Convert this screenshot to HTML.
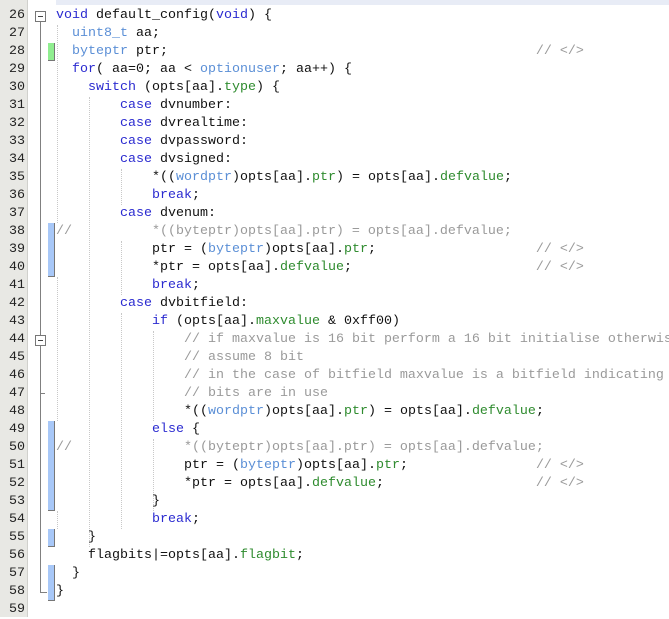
<!DOCTYPE html>
<html><head><style>
body{margin:0;width:669px;height:617px;overflow:hidden;background:#fff;position:relative;font-family:"Liberation Mono",monospace;font-size:13.33px}
.g{position:absolute;left:0;top:0;width:27px;height:617px;background:#e8e8e4;border-right:1px solid #d0d0cc}
.n{position:absolute;left:0;width:25px;text-align:right;height:18px;line-height:18px;color:#222}
.l{position:absolute;left:56px;height:18px;line-height:18px;white-space:pre;color:#111}
.k{color:#2b2bd0}.t{color:#5b8fd6}.m{color:#2e8b2e}.c{color:#9a9a9a}
.gd{position:absolute;width:0;border-left:1px dotted #c8c8c8}
.mk{position:absolute;left:48px;width:6px;border:1px solid #777;border-top:none;border-left:none}
.fb{position:absolute;left:35px;width:9px;height:9px;border:1px solid #777;background:#fff}
.fb:after{content:"";position:absolute;left:2px;top:4px;width:5px;height:1px;background:#444}
</style></head><body>
<div style="position:absolute;left:56px;top:0;width:613px;height:5px;background:#e8ecf6"></div>
<div class="g"></div>
<div class="n" style="top:-11px">25</div>
<div style="position:absolute;left:40px;top:21px;width:1px;height:572px;background:#808080"></div>
<div style="position:absolute;left:40px;top:592px;width:7px;height:1px;background:#808080"></div>
<div style="position:absolute;left:40px;top:393px;width:5px;height:1px;background:#808080"></div>
<div class="fb" style="top:11px"></div>
<div class="fb" style="top:335px"></div>
<div class="mk" style="top:43px;height:17px;background:#90ee90"></div>
<div class="mk" style="top:223px;height:53px;background:#a8c8f8"></div>
<div class="mk" style="top:421px;height:89px;background:#a8c8f8"></div>
<div class="mk" style="top:529px;height:17px;background:#a8c8f8"></div>
<div class="mk" style="top:565px;height:35px;background:#a8c8f8"></div>
<div class="gd" style="left:57px;top:25px;height:198px"></div>
<div class="gd" style="left:57px;top:277px;height:144px"></div>
<div class="gd" style="left:57px;top:511px;height:18px"></div>
<div class="gd" style="left:89px;top:97px;height:450px"></div>
<div class="gd" style="left:121px;top:169px;height:36px"></div>
<div class="gd" style="left:121px;top:241px;height:54px"></div>
<div class="gd" style="left:121px;top:313px;height:216px"></div>
<div class="gd" style="left:153px;top:331px;height:90px"></div>
<div class="gd" style="left:153px;top:439px;height:72px"></div>

<div class="n" style="top:7px">26</div><div class="l" style="top:7px"><span class="k">void</span> default_config(<span class="k">void</span>) {</div>
<div class="n" style="top:25px">27</div><div class="l" style="top:25px">  <span class="t">uint8_t</span> aa;</div>
<div class="n" style="top:43px">28</div><div class="l" style="top:43px">  <span class="t">byteptr</span> ptr;                                              <span class="c">// &lt;/&gt;</span></div>
<div class="n" style="top:61px">29</div><div class="l" style="top:61px">  <span class="k">for</span>( aa=0; aa &lt; <span class="t">optionuser</span>; aa++) {</div>
<div class="n" style="top:79px">30</div><div class="l" style="top:79px">    <span class="k">switch</span> (opts[aa].<span class="m">type</span>) {</div>
<div class="n" style="top:97px">31</div><div class="l" style="top:97px">        <span class="k">case</span> dvnumber:</div>
<div class="n" style="top:115px">32</div><div class="l" style="top:115px">        <span class="k">case</span> dvrealtime:</div>
<div class="n" style="top:133px">33</div><div class="l" style="top:133px">        <span class="k">case</span> dvpassword:</div>
<div class="n" style="top:151px">34</div><div class="l" style="top:151px">        <span class="k">case</span> dvsigned:</div>
<div class="n" style="top:169px">35</div><div class="l" style="top:169px">            *((<span class="t">wordptr</span>)opts[aa].<span class="m">ptr</span>) = opts[aa].<span class="m">defvalue</span>;</div>
<div class="n" style="top:187px">36</div><div class="l" style="top:187px">            <span class="k">break</span>;</div>
<div class="n" style="top:205px">37</div><div class="l" style="top:205px">        <span class="k">case</span> dvenum:</div>
<div class="n" style="top:223px">38</div><div class="l" style="top:223px"><span class="c">//          *((byteptr)opts[aa].ptr) = opts[aa].defvalue;</span></div>
<div class="n" style="top:241px">39</div><div class="l" style="top:241px">            ptr = (<span class="t">byteptr</span>)opts[aa].<span class="m">ptr</span>;                    <span class="c">// &lt;/&gt;</span></div>
<div class="n" style="top:259px">40</div><div class="l" style="top:259px">            *ptr = opts[aa].<span class="m">defvalue</span>;                       <span class="c">// &lt;/&gt;</span></div>
<div class="n" style="top:277px">41</div><div class="l" style="top:277px">            <span class="k">break</span>;</div>
<div class="n" style="top:295px">42</div><div class="l" style="top:295px">        <span class="k">case</span> dvbitfield:</div>
<div class="n" style="top:313px">43</div><div class="l" style="top:313px">            <span class="k">if</span> (opts[aa].<span class="m">maxvalue</span> &amp; 0xff00)</div>
<div class="n" style="top:331px">44</div><div class="l" style="top:331px">                <span class="c">// if maxvalue is 16 bit perform a 16 bit initialise otherwise</span></div>
<div class="n" style="top:349px">45</div><div class="l" style="top:349px">                <span class="c">// assume 8 bit</span></div>
<div class="n" style="top:367px">46</div><div class="l" style="top:367px">                <span class="c">// in the case of bitfield maxvalue is a bitfield indicating</span></div>
<div class="n" style="top:385px">47</div><div class="l" style="top:385px">                <span class="c">// bits are in use</span></div>
<div class="n" style="top:403px">48</div><div class="l" style="top:403px">                *((<span class="t">wordptr</span>)opts[aa].<span class="m">ptr</span>) = opts[aa].<span class="m">defvalue</span>;</div>
<div class="n" style="top:421px">49</div><div class="l" style="top:421px">            <span class="k">else</span> {</div>
<div class="n" style="top:439px">50</div><div class="l" style="top:439px"><span class="c">//              *((byteptr)opts[aa].ptr) = opts[aa].defvalue;</span></div>
<div class="n" style="top:457px">51</div><div class="l" style="top:457px">                ptr = (<span class="t">byteptr</span>)opts[aa].<span class="m">ptr</span>;                <span class="c">// &lt;/&gt;</span></div>
<div class="n" style="top:475px">52</div><div class="l" style="top:475px">                *ptr = opts[aa].<span class="m">defvalue</span>;                   <span class="c">// &lt;/&gt;</span></div>
<div class="n" style="top:493px">53</div><div class="l" style="top:493px">            }</div>
<div class="n" style="top:511px">54</div><div class="l" style="top:511px">            <span class="k">break</span>;</div>
<div class="n" style="top:529px">55</div><div class="l" style="top:529px">    }</div>
<div class="n" style="top:547px">56</div><div class="l" style="top:547px">    flagbits|=opts[aa].<span class="m">flagbit</span>;</div>
<div class="n" style="top:565px">57</div><div class="l" style="top:565px">  }</div>
<div class="n" style="top:583px">58</div><div class="l" style="top:583px">}</div>
<div class="n" style="top:601px">59</div>
</body></html>
